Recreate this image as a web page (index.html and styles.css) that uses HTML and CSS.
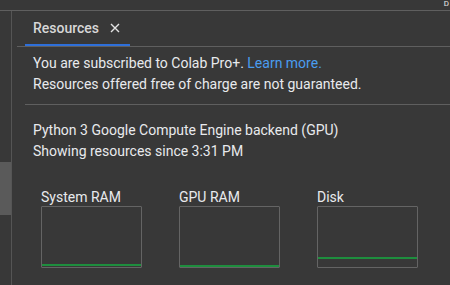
FILE: index.html
```html
<!DOCTYPE html>
<html>
<head>
<meta charset="utf-8">
<link rel="stylesheet" href="styles.css">
</head>
<body>
<div class="topbar"><span class="corner">D</span></div>
<div class="main">
  <div class="sidebar"><div class="thumb"></div></div>
  <div class="panel">
    <div class="tabs">
      <div class="tab">
        <span class="tab-label">Resources</span>
        <svg class="tab-close" width="10" height="10" viewBox="0 0 10 10"><path d="M1 1L9 9M9 1L1 9" stroke="#e3e3e3" stroke-width="1.4" fill="none"/></svg>
      </div>
    </div>
    <div class="content">
      <div class="section">
        <p class="line">You are subscribed to Colab Pro+. <a class="link">Learn more.</a></p>
        <p class="line">Resources offered free of charge are not guaranteed.</p>
      </div>
      <div class="section second">
        <p class="line">Python 3 Google Compute Engine backend (GPU)</p>
        <p class="line">Showing resources since 3:31 PM</p>
      </div>
      <div class="charts">
        <div class="chart">
          <div class="chart-label">System RAM</div>
          <div class="chart-box"><div class="bar sys"></div></div>
        </div>
        <div class="chart">
          <div class="chart-label">GPU RAM</div>
          <div class="chart-box"><div class="bar gpu"></div></div>
        </div>
        <div class="chart">
          <div class="chart-label">Disk</div>
          <div class="chart-box"><div class="bar disk"></div></div>
        </div>
      </div>
    </div>
  </div>
</div>
</body>
</html>
```
FILE: styles.css
```css
html, body {
  margin: 0;
  padding: 0;
  background: #383838;
  font-family: Roboto, "Noto Sans", sans-serif;
  color: #e3e3e3;
  overflow: hidden;
}
.topbar {
  height: 10px;
  border-bottom: 1px solid #5f5f5f;
  position: relative;
}
.corner {
  position: absolute;
  right: 1px;
  top: 0;
  font-size: 8px;
  line-height: 8px;
  color: #e8e8e8;
}
.main {
  display: flex;
  height: 274px;
}
.sidebar {
  width: 11px;
  border-right: 1px solid #555;
  padding-top: 151px;
  box-sizing: content-box;
}
.thumb {
  width: 11px;
  height: 53px;
  background: #5a5a5a;
}
.panel {
  flex: 1;
  padding-left: 5px;
}
.tabs {
  height: 35px;
  border-bottom: 1px solid #5f5f5f;
  display: flex;
  align-items: flex-end;
}
.tab {
  margin-left: 8px;
  width: 105px;
  box-sizing: border-box;
  height: 35px;
  padding: 0 8px;
  border-bottom: 2px solid #2e6fd9;
  display: flex;
  align-items: center;
  gap: 11px;
  padding-top: 1px;
}
.tab-label {
  font-size: 14px;
  font-weight: 500;
  color: #d7d7d7;
}
.tab-close {
  display: block;
}
.content {
  padding-left: 8px;
}
.section {
  padding: 6px 0 9px 8px;
  border-bottom: 1px solid #5f5f5f;
}
.section.second {
  border-bottom: none;
  padding-top: 15px;
}
.line {
  margin: 0;
  font-size: 14px;
  line-height: 21px;
  color: #e8eaed;
}
.link {
  color: #4a9df0;
}
.charts {
  display: flex;
  padding-left: 16px;
  gap: 37px;
  padding-top: 18px;
}
.chart-label {
  font-size: 14px;
  line-height: 16px;
  color: #e8eaed;
  margin-bottom: 1px;
}
.chart-box {
  width: 101px;
  height: 62px;
  box-sizing: border-box;
  border: 1px solid #646464;
  border-radius: 1px;
  position: relative;
}
.bar {
  position: absolute;
  left: 0;
  right: 0;
  background: #1e8e3e;
}
.bar.sys { bottom: 1px; height: 2px; }
.bar.gpu { bottom: 0; height: 2px; }
.bar.disk { bottom: 8px; height: 2px; }
```
